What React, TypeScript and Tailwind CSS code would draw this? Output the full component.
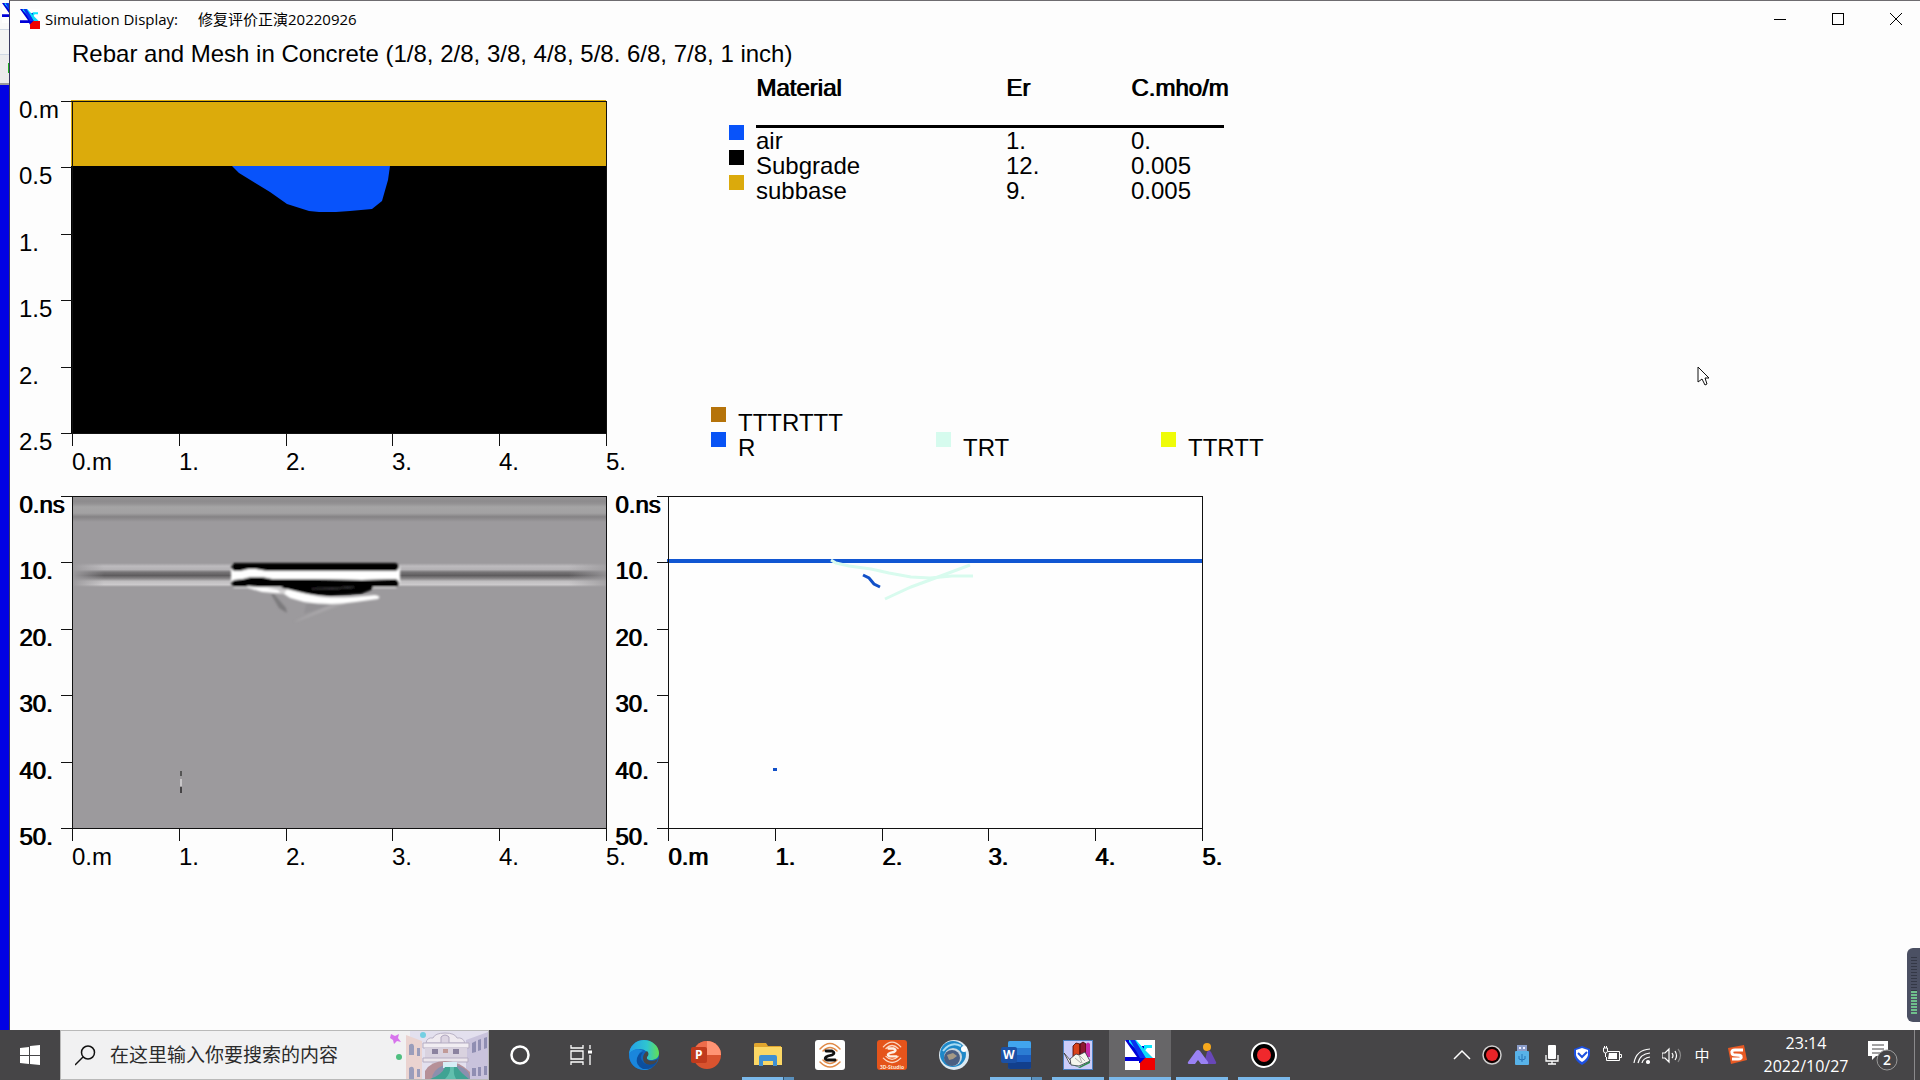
import type { ReactNode } from "react";
import clsx from "clsx";

const PLOT_W = 534;
const PLOT_H = 332;

const materials = [
  { name: "air", er: "1.", c: "0.", swatch: "bg-[#0853fa]" },
  { name: "Subgrade", er: "12.", c: "0.005", swatch: "bg-black" },
  { name: "subbase", er: "9.", c: "0.005", swatch: "bg-[#dbaa0c]" },
];

const phases = [
  { name: "TTTRTTT", swatch: "bg-[#b5730a]" },
  { name: "R", swatch: "bg-[#0853f5]" },
  { name: "TRT", swatch: "bg-[#d6fbee]" },
  { name: "TTRTT", swatch: "bg-[#effc08]" },
];

const meters = ["0.m", "1.", "2.", "3.", "4.", "5."];
const depths = ["0.m", "0.5", "1.", "1.5", "2.", "2.5"];
const times = ["0.ns", "10.", "20.", "30.", "40.", "50."];

const heavy = "[text-shadow:1px_0_0_#000]";

const AppLogo = ({ className }: { className?: string }) => (
  <svg viewBox="0 0 30 30" className={className} aria-hidden="true">
    <rect width="30" height="30" fill="#fff" />
    <path d="M0 0h5l12 14V6h3v17h-6v-2H0v-4h12z" fill="#0000d8" />
    <path d="M4 0h7l8 9V5h8v3h-5l-3 4 5 6h-5L4 2z" fill="#08e8ff" />
    <path d="M5 0h5l11 18h-6z" fill="#0a30f0" />
    <path d="M14 4l16 16v3h-6z" fill="#10d8f8" />
    <path d="M15 30V23l5-5h10v12z" fill="#f00000" />
  </svg>
);

type PlotProps = {
  label: string;
  yLabels: string[];
  heavyX?: boolean;
  heavyY?: boolean;
  children: ReactNode;
};

const Plot = ({ label, yLabels, heavyX, heavyY, children }: PlotProps) => (
  <svg
    width="596"
    height="395"
    role="img"
    aria-label={label}
    className="shrink-0 overflow-visible text-2xl"
  >
    <g transform="translate(62 21)">
      {children}
      <g stroke="#111" shapeRendering="crispEdges" fill="none">
        <rect x="0" y="0" width={PLOT_W} height={PLOT_H} />
        {yLabels.map((_, i) => {
          const y = Math.round((PLOT_H / 5) * i);
          return <line key={i} x1="-11" x2="0" y1={y} y2={y} />;
        })}
        {meters.map((_, i) => {
          const x = Math.round((PLOT_W / 5) * i);
          return <line key={i} x1={x} x2={x} y1={PLOT_H} y2={PLOT_H + 13} />;
        })}
      </g>
      <g className={clsx(heavyY && heavy)}>
        {yLabels.map((t, i) => (
          <text key={t} x="-53" y={Math.round((PLOT_H / 5) * i) + 17}>
            {t}
          </text>
        ))}
      </g>
      <g className={clsx(heavyX && heavy)}>
        {meters.map((t, i) => (
          <text key={t} x={Math.round((PLOT_W / 5) * i)} y={PLOT_H + 37}>
            {t}
          </text>
        ))}
      </g>
    </g>
  </svg>
);

const ModelPlot = () => (
  <Plot label="Depth model" yLabels={depths}>
    <rect x="-1" y="-1" width="535" height="66" fill="#dcab0b" />
    <rect x="-1" y="65" width="535" height="268" fill="#000" />
    <path
      d="M160 65L167 72L180 80L198 91L215 103L237 110L247 111H264L278 110L300 108L310 100L316 79L318 65z"
      fill="#0853fb"
    />
  </Plot>
);

const RadarPlot = () => (
  <Plot label="Radar section" yLabels={times} heavyY>
    <defs>
      <linearGradient id="direct" x1="0" y1="0" x2="0" y2="1">
        <stop offset="0" stopColor="#989698" />
        <stop offset="0.2" stopColor="#8d8b8d" />
        <stop offset="0.3" stopColor="#949294" />
        <stop offset="0.42" stopColor="#a5a4a5" />
        <stop offset="0.66" stopColor="#a2a1a2" />
        <stop offset="0.8" stopColor="#858385" />
        <stop offset="1" stopColor="#9c9a9d" />
      </linearGradient>
      <linearGradient id="band" x1="0" y1="0" x2="0" y2="1">
        <stop offset="0" stopColor="#9c9a9d" />
        <stop offset="0.13" stopColor="#bdbbbe" />
        <stop offset="0.27" stopColor="#b4b2b5" />
        <stop offset="0.38" stopColor="#777577" />
        <stop offset="0.52" stopColor="#5e5c5e" />
        <stop offset="0.64" stopColor="#858385" />
        <stop offset="0.76" stopColor="#c0bec0" />
        <stop offset="0.9" stopColor="#cccacc" />
        <stop offset="1" stopColor="#9c9a9d" />
      </linearGradient>
      <linearGradient id="edges">
        <stop offset="0" stopColor="#9c9a9d" />
        <stop offset="0.06" stopColor="#9c9a9d" stopOpacity="0" />
        <stop offset="0.93" stopColor="#9c9a9d" stopOpacity="0" />
        <stop offset="1" stopColor="#9c9a9d" stopOpacity="0.8" />
      </linearGradient>
      <filter id="soft" x="-10%" y="-20%" width="120%" height="140%">
        <feGaussianBlur stdDeviation="0.8" />
      </filter>
    </defs>
    <rect width={PLOT_W} height={PLOT_H} fill="#9c9a9d" />
    <rect width={PLOT_W} height="26" fill="url(#direct)" />
    <rect y="67" width={PLOT_W} height="24" fill="url(#band)" />
    <rect y="67" width={PLOT_W} height="24" fill="url(#edges)" />
    <g filter="url(#soft)">
      <path d="M199 98l3 0 12 14 1 5-8-5z" fill="#7c7a7d" />
      <path d="M234 108q16-9 34-5l-10 6-26 9z" fill="#939194" />
      <path d="M222 126q15-8 40-19l12 0q-24 9-48 18z" fill="#a8a6a9" />
      <path d="M160 68H324l4 3v17l-4 4H162l-3-4V70z" fill="#fff" />
      <path d="M162 67H324q6 4 0 8H195L184 73H176L168 75H162q-6-4 0-8z" fill="#000" />
      <path
        d="M162 84l9-1 8-2h11l10 2h40l50 1 34-1q6 4 1 8l-24 0-2 3-10 4-30 2-28-2-14-4-8-3H162q-6-4 0-7z"
        fill="#000"
      />
      <path d="M240 93q24 0 42-2" stroke="#4a484b" fill="none" />
      <path d="M175 90l12 1 24 3 3 4-24-2-14-4z" fill="#fff" />
      <path d="M206 93l8 0 2 5-8 0z" fill="#d2d0d2" />
      <path
        d="M215 93q20 5 30 7t34 1l24-2q7 1 3 4l-22 3q-25 4-52 0l-14-4-6-4z"
        fill="#fff"
      />
    </g>
    <g>
      <rect x="108" y="275" width="2" height="5" fill="#555" />
      <rect x="108" y="283" width="2" height="7" fill="#c8c6c8" />
      <rect x="108" y="291" width="2" height="6" fill="#454345" />
    </g>
  </Plot>
);

const RayPlot = () => (
  <Plot label="Ray arrivals" yLabels={times} heavyX heavyY>
    <rect width={PLOT_W} height={PLOT_H} fill="#fefefe" />
    <rect x="-1" y="63" width="535" height="4" fill="#1156d2" />
    <g fill="none" stroke="#d8fbee" strokeWidth="3">
      <path d="M163 64L168 67L181 70L203 73L221 77L243 81L262 82L284 80L305 80" />
      <path d="M217 103L243 91L270 81L302 69" />
    </g>
    <path d="M195 79L201 82L206 88L212 91" fill="none" stroke="#1150c8" strokeWidth="3" />
    <rect x="105" y="272" width="4" height="3" fill="#1150c8" />
  </Plot>
);

const MaterialTable = () => (
  <table className="ml-[123px] w-[495px] table-fixed border-separate border-spacing-0 text-left text-2xl/[25px] whitespace-nowrap">
    <colgroup>
      <col className="w-[27px]" />
      <col className="w-[250px]" />
      <col className="w-[125px]" />
      <col className="w-[93px]" />
    </colgroup>
    <thead>
      <tr className={clsx("h-[53px] align-top", heavy)}>
        <td />
        <th className="border-b-[3px] border-black font-normal">Material</th>
        <th className="border-b-[3px] border-black font-normal">Er</th>
        <th className="border-b-[3px] border-black font-normal">C.mho/m</th>
      </tr>
    </thead>
    <tbody>
      {materials.map((m) => (
        <tr key={m.name}>
          <td className="align-top">
            <span className={clsx("-mt-[3px] block size-[15px]", m.swatch)} />
          </td>
          <td>{m.name}</td>
          <td>{m.er}</td>
          <td>{m.c}</td>
        </tr>
      ))}
    </tbody>
  </table>
);

const PhaseLegend = () => (
  <ul className="mt-[207px] ml-[105px] grid grid-cols-[225px_225px_225px] text-2xl/[25px]">
    {phases.map((p, i) => (
      <li key={p.name} className={clsx("flex items-start gap-3", i === 0 && "col-span-3")}>
        <span className={clsx("-mt-[3px] size-[15px]", p.swatch)} />
        {p.name}
      </li>
    ))}
  </ul>
);

const TitleBar = () => (
  <header className="flex h-[36px] items-center pl-[10px] font-['Open_Sans','Noto_Sans_CJK_SC',sans-serif] text-[15px]">
    <AppLogo className="size-5" />
    <h1 className="ml-[5px] flex gap-5">
      <span>Simulation Display:</span>
      <span>修复评价正演20220926</span>
    </h1>
    <div className="ml-auto flex gap-[10px]">
      <button aria-label="Minimize" className="grid h-[36px] w-12 place-items-center">
        <svg width="12" height="12" stroke="#000" shapeRendering="crispEdges">
          <path d="M0 6.500h12" />
        </svg>
      </button>
      <button aria-label="Maximize" className="grid h-[36px] w-12 place-items-center">
        <svg width="12" height="12" stroke="#000" fill="none" shapeRendering="crispEdges">
          <rect x="0.500" y="0.500" width="11" height="11" />
        </svg>
      </button>
      <button aria-label="Close" className="grid h-[36px] w-12 place-items-center">
        <svg width="12" height="12" stroke="#000">
          <path d="M0 0l12 12M12 0L0 12" />
        </svg>
      </button>
    </div>
  </header>
);

const Bridge = () => (
  <svg width="98" height="48" className="ml-auto" aria-hidden="true">
    <path d="M1 3l4 2 4-2-1 4 3 4-4-1-3 3-1-4-3-2z" fill="#d774ec" />
    <circle cx="9" cy="26" r="3" fill="#4fbf80" />
    <rect x="20" y="0" width="78" height="48" fill="#e3e0ee" />
    <path d="M16 4l16 6v38H16z" fill="#ead3d0" />
    <path d="M19 14q4-3 5 1v9h-5zM19 37q4-3 5 1v10h-5zM27 17h3v8h-3zM27 38h3v8h-3z" fill="#9a9dbb" />
    <path d="M76 9l22-8v47H76z" fill="#c9c3dc" />
    <path d="M82 12l4-2v11l-4 1zM88 9l3-1v11l-3 1zM94 7l3-1v11l-3 1zM82 37h4v8h-4zM88 36h3v9h-3zM94 35h3v9h-3z" fill="#8f8eb2" />
    <path d="M36 12q1-6 7-5 2-5 12-5t12 5q6-1 8 5z" fill="#efeaf0" stroke="#b9b2c6" />
    <path d="M51 12V6q4-4 8 0v6" fill="#dcd4e2" stroke="#b0a7bf" />
    <path d="M33 12h46v5H33z" fill="#f1edf2" stroke="#b5adc2" />
    <path d="M35 17h42v12H35z" fill="#d9d2df" />
    <path d="M42 18h6v5h-6zM63 18h6v5h-6z" fill="#8b829f" />
    <path d="M53 18h5v4h-5z" fill="#c19a98" />
    <path d="M33 27h45v4H33z" fill="#ece6ec" stroke="#b5adc2" />
    <path d="M35 48V40q6-10 20-10t25 11v7z" fill="#b69098" />
    <path d="M42 48q0-9 12-14h12q14 4 14 14z" fill="#8b8fae" />
    <path d="M53 31h14v6H53z" fill="#d7eef6" />
    <path d="M40 48q12-4 15-12h12q3 5 12 12z" fill="#3fa393" />
    <path d="M55 48q6-6 5-12h4q-1 7 2 12z" fill="#61bfae" />
    <circle cx="33" cy="4" r="3" fill="#74cfe2" />
  </svg>
);

const OrangeWaves = ({ color, ink }: { color: string; ink: string }) => (
  <g fill="none" strokeLinecap="round">
    <path d="M5 9q10-11 20 0M8 11q7-7 14 0M5 22q10 10 20 0M8 20q7 7 14 0" stroke={color} strokeWidth="1.500" />
    <path d="M11 11h6q4 2 0 4l-4 1q-5 2-1 4h8" stroke={ink} strokeWidth="2.800" />
  </g>
);

const taskIcons: { name: string; state?: "open" | "multi" | "active"; icon: ReactNode }[] = [
  { name: "Cortana", icon: <circle cx="15" cy="15" r="8.500" fill="none" stroke="#fff" strokeWidth="2.500" /> },
  {
    name: "Task View",
    icon: (
      <g fill="none" stroke="#fff" strokeWidth="1.300">
        <path d="M4 5v3h12V5M4 25v-3h12v3M4 11h12v8H4zM23 5v4M23 15v10" />
        <path d="M21 12h4" strokeWidth="3" />
      </g>
    ),
  },
  {
    name: "Edge",
    icon: (
      <>
        <defs>
          <linearGradient id="edgeTop">
            <stop offset="0" stopColor="#249fe8" />
            <stop offset="0.6" stopColor="#2fc5d0" />
            <stop offset="1" stopColor="#64e052" />
          </linearGradient>
        </defs>
        <circle cx="15" cy="15" r="15" fill="#0f64bd" />
        <path d="M0 15C0 6 7 0 15 0s15 6 15 13c0 5-4 7-8 7-3 0-5-1-4-3 3-5-3-8-7-8-6 0-10 3-11 6z" fill="url(#edgeTop)" />
        <path d="M0 14c3-5 10-6 14-3-5 1-7 8-3 13 3 4 8 6 12 4-8 5-23 1-23-14z" fill="#1a86dc" />
        <path d="M18 11q3 3 0 6-1 3 4 4 4 0 7-2-2 5-5 6-10 1-10-7 0-4 4-7z" fill="#464547" />
        <path d="M14 12q-5 6 1 11 6 4 13-1-5 8-14 7-8-4-6-11 2-5 6-6z" fill="#0c4f9f" />
      </>
    ),
  },
  {
    name: "PowerPoint",
    icon: (
      <>
        <circle cx="16" cy="15" r="14" fill="#d9532f" />
        <path d="M16 1a14 14 0 0 1 14 14H16z" fill="#ff9474" />
        <path d="M16 1a14 14 0 0 0-14 14h14z" fill="#ee6c4b" />
        <rect x="0" y="7" width="16" height="16" rx="2" fill="#c03a1c" />
        <text x="4" y="19" fontSize="12" fontWeight="700" fill="#fff">P</text>
      </>
    ),
  },
  {
    name: "File Explorer",
    state: "multi",
    icon: (
      <>
        <path d="M1 4q0-1 2-1h10l2 3h13v19H1z" fill="#e0a52e" />
        <rect x="1" y="7" width="28" height="18" fill="#fbd765" />
        <path d="M6 26V17q0-2 2-2h14q2 0 2 2v9h-4v-5H10v5z" fill="#3f8fd2" />
      </>
    ),
  },
  {
    name: "Survey",
    icon: (
      <>
        <rect width="30" height="30" rx="3" fill="#fff" />
        <OrangeWaves color="#e08a48" ink="#111" />
      </>
    ),
  },
  {
    name: "3D Studio",
    icon: (
      <>
        <rect width="30" height="30" rx="3" fill="#e5541b" />
        <g transform="translate(2 -1) scale(.87)">
          <OrangeWaves color="#fbd8c4" ink="#fdeee4" />
        </g>
        <text x="15" y="29" fontSize="5" fontWeight="700" textAnchor="middle" fill="#fde3d3">3D-Studio</text>
      </>
    ),
  },
  {
    name: "Globe",
    icon: (
      <>
        <circle cx="15" cy="15" r="15" fill="#dbe9f2" />
        <circle cx="14" cy="14" r="13" fill="#1e88c8" />
        <path d="M4 11q8-10 18-5" stroke="#a8dcf4" strokeWidth="2" fill="none" />
        <circle cx="14" cy="17" r="9" fill="#c9d6de" />
        <circle cx="13" cy="18" r="8" fill="#4a5f82" />
        <path d="M8 15l6-2 4 3-4 3-4 1z" fill="#a49a86" />
        <circle cx="25" cy="9" r="3" fill="#fff" />
      </>
    ),
  },
  {
    name: "Word",
    state: "multi",
    icon: (
      <>
        <rect x="7" y="1" width="23" height="28" rx="2" fill="#1b5cbd" />
        <path d="M7 8V3q0-2 2-2h19q2 0 2 2v5z" fill="#41a5ee" />
        <path d="M7 8h23v7H7z" fill="#2b7cd3" />
        <path d="M7 22h23v5q0 2-2 2H9q-2 0-2-2z" fill="#123f8c" />
        <rect x="0" y="7" width="16" height="16" rx="2" fill="#1b51a6" />
        <text x="2" y="19" fontSize="12" fontWeight="700" fill="#fff">W</text>
      </>
    ),
  },
  {
    name: "Library",
    state: "open",
    icon: (
      <>
        <rect x="0.500" y="0.500" width="29" height="29" fill="#cccdfa" stroke="#4a7fc0" />
        <path d="M10 6l3-3 4 1v14l-7 2z" fill="#d8421c" stroke="#400" strokeWidth=".8" />
        <path d="M17 4l3-2 3 2v13h-6z" fill="#8c1830" stroke="#300" strokeWidth=".8" />
        <path d="M23 4q2-3 4 0v13h-4z" fill="#c72aa8" />
        <path d="M1 13l7 8-1 3z" fill="#fff" stroke="#333" strokeWidth=".8" />
        <path d="M7 19l6-5 3 1 6-3 5 9-11 5-8-1z" fill="#f4f6ee" stroke="#334" strokeWidth=".8" />
        <path d="M7 24l9 3 11-6v2l-10 5z" fill="#2f8a4c" />
        <path d="M12 18l6 5M17 16l5 5M16 15l3 8" stroke="#999" strokeWidth=".8" />
      </>
    ),
  },
  { name: "Simulation Display", state: "active", icon: <AppLogo /> },
  {
    name: "Photos",
    state: "open",
    icon: (
      <>
        <circle cx="20" cy="7" r="4" fill="#f6a81c" />
        <path d="M17 24l3-12q2-3 4 0l5 10q1 2-2 2z" fill="#6847b8" />
        <path d="M1 22L9 11q2-2 4 0l8 11q1 2-2 2h-5l-3-4-3 4H3q-3 0-2-2z" fill="#9a82f4" />
      </>
    ),
  },
  {
    name: "Recorder",
    state: "open",
    icon: (
      <>
        <circle cx="15" cy="15" r="12" fill="#000" stroke="#fff" strokeWidth="2" />
        <circle cx="15" cy="15" r="7" fill="#f0282c" />
      </>
    ),
  },
];

const trayIcons: { name: string; icon: ReactNode }[] = [
  { name: "Show hidden icons", icon: <path d="M2 14l8-8 8 8" fill="none" stroke="#fff" strokeWidth="1.500" /> },
  {
    name: "Recording",
    icon: (
      <>
        <circle cx="10" cy="10" r="9" fill="#100" stroke="#ccc" strokeWidth="1.500" />
        <circle cx="10" cy="10" r="6" fill="#ea2428" />
      </>
    ),
  },
  {
    name: "USB",
    icon: (
      <>
        <rect x="5" y="0" width="10" height="7" fill="#8a9cc8" />
        <path d="M7 3h2M11 3h2" stroke="#eef" strokeWidth="2" />
        <rect x="3" y="6" width="14" height="14" rx="1" fill="#58b2e8" />
        <path d="M10 17V9M7 11v3l3 1 3-1v-3" fill="none" stroke="#2474b8" />
      </>
    ),
  },
  {
    name: "Microphone",
    icon: (
      <>
        <rect x="6" y="0" width="8" height="14" rx="1" fill="#fff" />
        <path d="M4 10v6h12v-6M10 16v3M6 19h8" fill="none" stroke="#fff" strokeWidth="1.300" />
      </>
    ),
  },
  {
    name: "Security",
    icon: (
      <>
        <path d="M10 1l8 3v6q-1 6-8 10-7-4-8-10V4z" fill="#1d50e0" />
        <path d="M10 3l6 2v5q-1 4-6 7-5-3-6-7V5z" fill="#fff" />
        <path d="M6 8l4 4 5-5" fill="none" stroke="#1d50e0" strokeWidth="2" />
      </>
    ),
  },
  {
    name: "Battery",
    icon: (
      <>
        <path d="M6 6.500h11.500v9h-13V12M18 9.500h1.500v3H18M1.500 3v3q0 2 2 2t2-2V3zM3.500 8v4M2.500 3V1M4.500 3V1" fill="none" stroke="#fff" />
        <path d="M7 8h8v6H6z" fill="#fff" />
      </>
    ),
  },
  {
    name: "Wi-Fi",
    icon: (
      <g fill="none" stroke="#fff" strokeWidth="1.200">
        <path d="M2 18Q4 5 18 4M6 18Q8 9 18 8M10 18Q11 13 18 12" />
        <circle cx="16" cy="17" r="1.500" fill="#fff" />
      </g>
    ),
  },
  {
    name: "Volume",
    icon: (
      <g fill="none" stroke="#fff" strokeWidth="1.200">
        <path d="M0 8h3l4-4v13l-4-4H0zM10 8q2 3 0 5M13 6q3 5 0 9" />
        <path d="M16 4q5 6 0 13" stroke="#888" />
      </g>
    ),
  },
];

const TaskBar = () => (
  <footer className="flex h-[50px] items-stretch bg-[#464547] font-['Open_Sans','Noto_Sans_CJK_SC',sans-serif] text-white">
    <button aria-label="Start" className="grid w-[60px] place-items-center">
      <svg width="20" height="20" fill="#fff">
        <path d="M0 3l9-1v8H0zM10 1l10-1v10H10zM0 11h9v8l-9-1zM10 11h10v9l-10-1z" />
      </svg>
    </button>
    <label className="flex w-[429px] items-center border border-[#b9b9b9] bg-[#f1f1f2] pl-[14px] text-[#222]">
      <svg width="21" height="21" fill="none" stroke="#111" strokeWidth="1.500" aria-hidden="true">
        <circle cx="13" cy="7.500" r="6.500" />
        <path d="M8 12l-8 8" />
      </svg>
      <input
        aria-label="搜索"
        placeholder="在这里输入你要搜索的内容"
        className="ml-[14px] w-[240px] bg-transparent text-[19px] outline-none placeholder:text-[#2b2b2b]"
      />
      <Bridge />
    </label>
    {taskIcons.map(({ name, state, icon }) => (
      <button
        key={name}
        aria-label={name}
        className={clsx("relative grid w-[62px] place-items-center", state === "active" && "bg-[#676668]")}
      >
        <svg width="30" height="30" viewBox="0 0 30 30">
          {icon}
        </svg>
        {state && (
          <span
            className={clsx(
              "absolute bottom-0 flex h-[3px] justify-end bg-[#7ab8ea]",
              state === "active" ? "inset-x-0" : "inset-x-[5px]",
            )}
          >
            {state === "multi" && <span className="w-[11px] border-l border-[#34536d] bg-[#5a90bd]" />}
          </span>
        )}
      </button>
    ))}
    <div className="ml-auto flex items-center">
      {trayIcons.map(({ name, icon }) => (
        <button key={name} aria-label={name} className="grid w-[30px] place-items-center">
          <svg width="20" height="20" viewBox="0 0 20 20">
            {icon}
          </svg>
        </button>
      ))}
      <button className="w-[30px] text-[15px]">中</button>
      <button aria-label="Sogou" className="ml-[5px] grid w-[30px] place-items-center">
        <svg width="20" height="20" viewBox="0 0 20 20">
          <path d="M1 3l16-3 3 15-16 4z" fill="#e85a24" />
          <path d="M16 5H8q-4 0-3 3 0 2 4 2t5 1q1 3-3 3H5" fill="none" stroke="#fff" strokeWidth="3" />
        </svg>
      </button>
      <button className="w-[108px] text-center text-base/[23px]">
        <span className="block">23:14</span>
        <span className="block">2022/10/27</span>
      </button>
      <button aria-label="Notifications" className="grid w-[54px] place-items-center pr-[8px]">
        <svg width="30" height="32" viewBox="0 0 30 32">
          <path d="M0 2h20v15H8l-4 4v-4H0z" fill="#fff" />
          <path d="M4 6h12M4 10h12M4 14h8" stroke="#464547" />
          <circle cx="19" cy="21" r="10" fill="#464547" stroke="#999" />
          <text x="19" y="26" fontSize="14" fontWeight="600" textAnchor="middle" fill="#fff">2</text>
        </svg>
      </button>
      <button aria-label="Show desktop" className="h-[50px] w-[6px] border-l border-[#8a898b]" />
    </div>
  </footer>
);

const App = () => (
  <div className="flex min-h-screen flex-col bg-[#fdfdfd] font-['Liberation_Sans','Noto_Sans_CJK_SC',sans-serif] text-black">
    <div className="relative flex flex-1">
      {/* sliver of the main window behind */}
      <div className="flex w-[9px] flex-col overflow-hidden bg-[#0202e4]">
        <div className="h-[29px] bg-[#fafafa] pt-[3px]">
          <AppLogo className="ml-[2px] size-[20px] max-w-none" />
        </div>
        <div className="h-[26px] border-y border-[#d0d8e4] bg-[#f4f4f4]" />
        <div className="h-[30px] border-b-2 border-[#9a9a9a] bg-[#ececec] pt-2">
          <div className="ml-auto h-[10px] w-px bg-[#20b020]" />
        </div>
      </div>

      <section className="flex-1 overflow-hidden border-t border-l border-t-[#6e6c70] border-l-[#3a3a60]">
        <TitleBar />
        <h2 className="pl-[62px] text-2xl/[34px]">
          Rebar and Mesh in Concrete (1/8, 2/8, 3/8, 4/8, 5/8. 6/8, 7/8, 1 inch)
        </h2>
        <div className="mt-1 flex">
          <div className="pt-[5px]">
            <ModelPlot />
          </div>
          <div>
            <MaterialTable />
            <PhaseLegend />
          </div>
        </div>
        <div className="flex">
          <RadarPlot />
          <RayPlot />
        </div>
      </section>

      {/* level meter docked at the screen edge */}
      <div className="absolute right-0 bottom-2 flex h-[74px] w-[13px] flex-col items-center justify-center rounded-l-md bg-[#4b5063] py-2">
        <div className="h-[34px] w-[6px] bg-[repeating-linear-gradient(#343846_0_1px,#4b5063_1px_3px)]" />
        <div className="h-[23px] w-[6px] bg-[repeating-linear-gradient(#6fc08c_0_2px,#4b5063_2px_3px)]" />
      </div>

      <svg width="13" height="20" className="absolute top-[366px] left-[1697px]" aria-hidden="true">
        <path d="M1 1v15l4-3 3 6 2-1-2-6h4z" fill="#fff" stroke="#111" />
      </svg>
    </div>
    <TaskBar />
  </div>
);

export default App;
